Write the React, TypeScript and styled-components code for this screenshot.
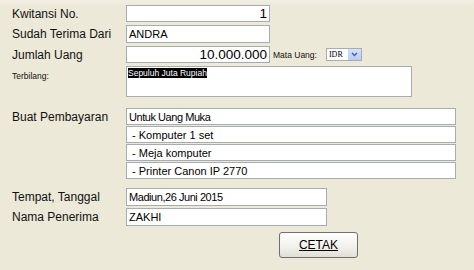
import styled, { createGlobalStyle } from "styled-components";

const GlobalStyle = createGlobalStyle`
  html, body {
    margin: 0;
    padding: 0;
    background: #ece9d8;
  }
  body {
    font-family: "Liberation Sans", Arial, sans-serif;
    color: #000;
  }
`;

const Page = styled.div`
  width: 474px;
  height: 270px;
  box-sizing: border-box;
  padding: 5px 0 0 12px;
  background: linear-gradient(#f1efe4 0, #ece9d8 6px);
  display: flex;
  flex-direction: column;
  overflow: hidden;
`;

const Row = styled.div<{ $h: number; $mt?: number; $top?: boolean }>`
  display: grid;
  grid-template-columns: 114px auto;
  align-items: ${(p) => (p.$top ? "start" : "center")};
  min-height: ${(p) => p.$h}px;
  margin-top: ${(p) => p.$mt ?? 0}px;
`;

const Label = styled.div<{ $small?: boolean; $pt?: number }>`
  font-size: ${(p) => (p.$small ? "8.5px" : "12px")};
  padding-top: ${(p) => p.$pt ?? 0}px;
  white-space: nowrap;
  color: #111;
`;

const Inline = styled.div`
  display: flex;
  align-items: center;
`;

const Field = styled.div<{ $w: number; $h: number; $right?: boolean; $big?: boolean; $tight?: boolean }>`
  box-sizing: border-box;
  width: ${(p) => p.$w}px;
  height: ${(p) => p.$h}px;
  border: 1px solid #a5acb2;
  background: #fff;
  padding: 0 2px;
  display: flex;
  align-items: center;
  justify-content: ${(p) => (p.$right ? "flex-end" : "flex-start")};
  font-size: ${(p) => (p.$big ? "13.5px" : "11px")};
  letter-spacing: ${(p) => (p.$tight ? "-0.45px" : "0")};
  white-space: nowrap;
  overflow: hidden;
`;

const TextArea = styled.div`
  box-sizing: border-box;
  width: 286px;
  height: 31px;
  border: 1px solid #a5acb2;
  background: #fff;
  padding: 1px 1px;
  font-size: 8.5px;
  line-height: 10px;
`;

const Selected = styled.span`
  background: #000;
  color: #fff;
`;

const SmallText = styled.span`
  font-size: 8.5px;
  margin: 0 9px 0 3px;
  color: #111;
`;

const Select = styled.div`
  box-sizing: border-box;
  width: 36px;
  height: 13px;
  border: 1px solid #a5acb2;
  background: #fff;
  display: flex;
  align-items: stretch;
  font-size: 8px;
`;

const SelectValue = styled.div`
  flex: 1;
  padding-left: 2px;
  display: flex;
  align-items: center;
  font-family: "Liberation Serif", serif;
`;

const SelectArrow = styled.div`
  width: 12px;
  background: linear-gradient(#d6e2fb, #b7cbf5);
  border-left: 1px solid #c9d6f0;
  display: flex;
  align-items: center;
  justify-content: center;
`;

const Stack = styled.div`
  display: flex;
  flex-direction: column;
  gap: 1px;
`;

const ButtonRow = styled.div`
  margin: 6px 0 0 267px;
`;

const Button = styled.button`
  width: 79px;
  height: 26px;
  border: 1px solid #6f6f6f;
  border-radius: 3px;
  background: linear-gradient(#ffffff, #f1f0ea 60%, #e0ded3);
  font-family: "Liberation Sans", Arial, sans-serif;
  font-size: 12px;
  text-decoration: underline;
  color: #000;
  padding: 0;
`;

export default function App() {
  return (
    <>
      <GlobalStyle />
      <Page>
        <Row $h={17}>
          <Label>Kwitansi No.</Label>
          <Field $w={144} $h={17} $right $big>
            1
          </Field>
        </Row>
        <Row $h={18} $mt={3}>
          <Label>Sudah Terima Dari</Label>
          <Field $w={144} $h={18}>
            ANDRA
          </Field>
        </Row>
        <Row $h={17} $mt={3}>
          <Label>Jumlah Uang</Label>
          <Inline>
            <Field $w={144} $h={17} $right $big>
              10.000.000
            </Field>
            <SmallText>Mata Uang:</SmallText>
            <Select>
              <SelectValue>IDR</SelectValue>
              <SelectArrow>
                <svg width="7" height="5" viewBox="0 0 7 5">
                  <path d="M1 1 L3.5 3.5 L6 1" fill="none" stroke="#4a5f9a" strokeWidth="1.4" />
                </svg>
              </SelectArrow>
            </Select>
          </Inline>
        </Row>
        <Row $h={31} $mt={3} $top>
          <Label $small $pt={5}>
            Terbilang:
          </Label>
          <TextArea>
            <Selected>Sepuluh Juta Rupiah</Selected>
          </TextArea>
        </Row>
        <Row $h={72} $mt={11} $top>
          <Label $pt={2}>Buat Pembayaran</Label>
          <Stack>
            <Field $w={330} $h={17} $tight>
              Untuk Uang Muka
            </Field>
            <Field $w={330} $h={17}>
              &nbsp;- Komputer 1 set
            </Field>
            <Field $w={330} $h={17}>
              &nbsp;- Meja komputer
            </Field>
            <Field $w={330} $h={17}>
              &nbsp;- Printer Canon IP 2770
            </Field>
          </Stack>
        </Row>
        <Row $h={18} $mt={8}>
          <Label>Tempat, Tanggal</Label>
          <Field $w={201} $h={18} $tight>
            Madiun,26 Juni 2015
          </Field>
        </Row>
        <Row $h={18} $mt={2}>
          <Label>Nama Penerima</Label>
          <Field $w={201} $h={18}>
            ZAKHI
          </Field>
        </Row>
        <ButtonRow>
          <Button>CETAK</Button>
        </ButtonRow>
      </Page>
    </>
  );
}
